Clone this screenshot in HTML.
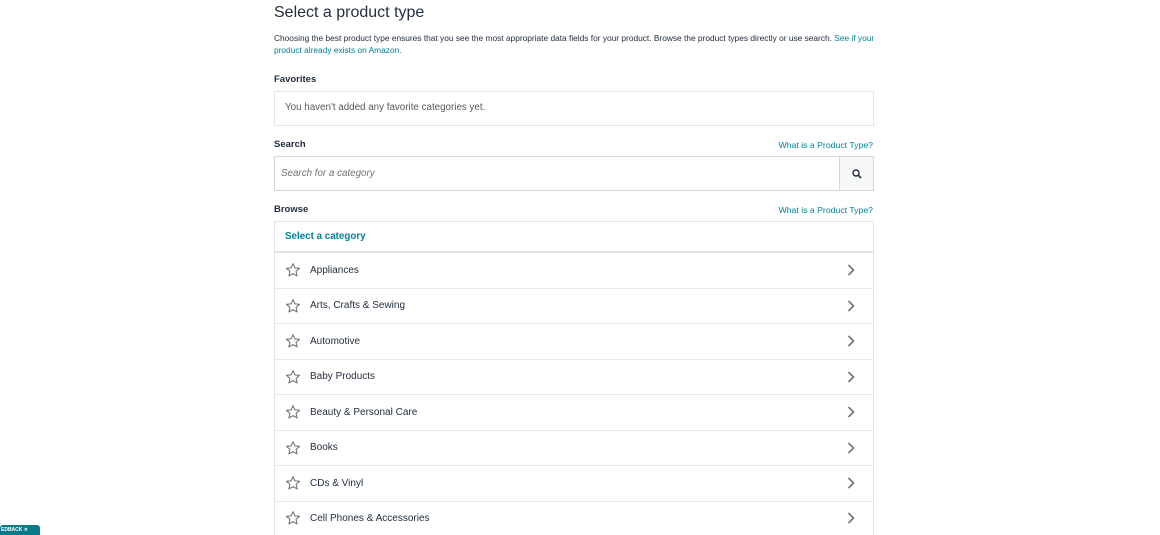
<!DOCTYPE html>
<html style="height:535px;overflow:hidden"><head><style>
*{box-sizing:border-box;margin:0;padding:0}
body{width:1160px;height:535px;overflow:hidden;background:#fff;font-family:"Liberation Sans",sans-serif;color:#0f1111;position:relative}
.a{position:absolute}
.t{left:274px;top:4px;font-size:16px;color:#232f3e}
.d{left:274px;top:32px;width:610px;font-size:8.35px;line-height:12px;color:#232f3e}
.l{color:#008296}
.h{font-size:9.5px;font-weight:bold;color:#232f3e}
.box{left:274px;width:600px;border:1px solid #e3e6e6}
.q{font-size:8.7px;color:#008296}
.row{height:35.5px;border-bottom:1px solid #e7e9e9;display:flex;align-items:center;font-size:10px;color:#232f3e;position:relative}
.row svg.s{margin:0 9px 0 10px}
.row svg.c{position:absolute;right:18px}
</style></head><body>
<div class="a t">Select a product type</div>
<div class="a d">Choosing the best product type ensures that you see the most appropriate data fields for your product. Browse the product types directly or use search. <span class="l">See if your product already exists on Amazon.</span></div>
<div class="a h" style="left:274px;top:74px">Favorites</div>
<div class="a box" style="top:91px;height:35px;padding:10px;font-size:9.8px;color:#565959">You haven't added any favorite categories yet.</div>
<div class="a h" style="left:274px;top:139px">Search</div>
<div class="a q" style="right:287px;top:140px">What is a Product Type?</div>
<div class="a box" style="top:156px;height:35px;border-color:#d5d9d9;font-size:9.8px;font-style:italic;color:#6f7373;padding:11px 6px">Search for a category</div>
<div class="a" style="left:839px;top:156px;width:35px;height:35px;background:#f7f8f8;border:1px solid #d5d9d9;display:flex;align-items:center;justify-content:center"><svg width="10" height="10" viewBox="0 0 10 10"><circle cx="4" cy="4" r="3" fill="none" stroke="#232f3e" stroke-width="1.4"/><path d="M6.2 6.2L9 9" stroke="#232f3e" stroke-width="1.6"/></svg></div>
<div class="a h" style="left:274px;top:204px">Browse</div>
<div class="a q" style="right:287px;top:205px">What is a Product Type?</div>
<div class="a box" style="top:221px;height:314px;border-bottom:none;overflow:hidden">
<div style="height:31px;border-bottom:2px solid #e3e6e6;padding:9px 10px;font-size:9.8px;font-weight:bold;color:#008296">Select a category</div>
<div id="rows"></div>
</div>
<div class="a" style="left:0;top:525px;width:40px;height:10px;background:#087a8a;border-radius:3px 3px 0 0;color:#fff;font-size:5px;padding:2px 0 0 1px;font-weight:bold;overflow:hidden">EDBACK ✕</div>
<script>
var n=["Appliances","Arts, Crafts &amp; Sewing","Automotive","Baby Products","Beauty &amp; Personal Care","Books","CDs &amp; Vinyl","Cell Phones &amp; Accessories"];
var h="";n.forEach(function(x,i){h+='<div class="row"'+(i==7?' style="height:33px;border-bottom:none"':'')+'><svg class="s" width="16" height="16" viewBox="0 0 24 24"><path d="M12 2.5l2.9 6.3 6.8.7-5.1 4.6 1.5 6.8L12 17.4l-6.1 3.5 1.5-6.8-5.1-4.6 6.8-.7z" fill="none" stroke="#6f7373" stroke-width="1.6" stroke-linejoin="round"/></svg>'+x+'<svg class="c" width="8" height="12" viewBox="0 0 8 12"><path d="M1.5 1l5 5-5 5" fill="none" stroke="#6f7373" stroke-width="1.6"/></svg></div>'});
document.getElementById("rows").innerHTML=h;
</script>
</body></html>
